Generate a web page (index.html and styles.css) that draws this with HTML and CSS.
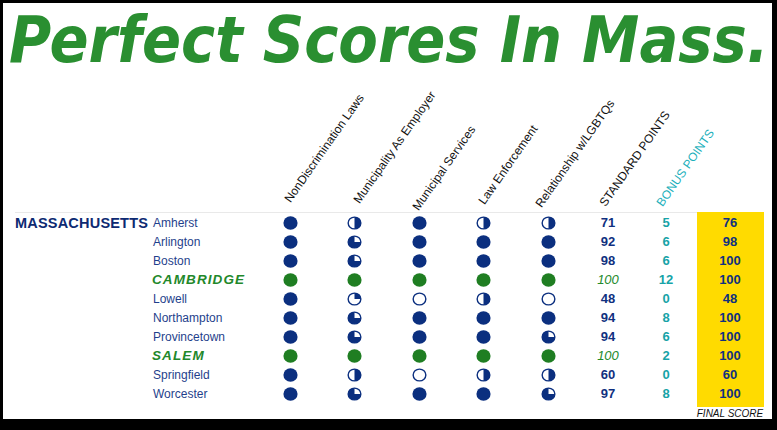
FILE: index.html
```html
<!DOCTYPE html>
<html>
<head>
<meta charset="utf-8">
<link rel="stylesheet" href="styles.css">
</head>
<body>
<svg class="defs" width="0" height="0" aria-hidden="true">
  <symbol id="full" viewBox="0 0 16 15"><ellipse cx="8" cy="7.5" rx="7.6" ry="7.1" fill="#0b2f7f"/></symbol>
  <symbol id="green" viewBox="0 0 16 15"><ellipse cx="8" cy="7.5" rx="7.6" ry="7.1" fill="#1f7e22"/></symbol>
  <symbol id="empty" viewBox="0 0 16 15"><ellipse cx="8" cy="7.5" rx="6.8" ry="6.3" fill="#fff" stroke="#0b2f7f" stroke-width="1.5"/></symbol>
  <symbol id="half" viewBox="0 0 16 15"><ellipse cx="8" cy="7.5" rx="6.8" ry="6.3" fill="#fff" stroke="#0b2f7f" stroke-width="1.5"/><path d="M8 1.2 A6.8 6.3 0 0 1 8 13.8 Z" fill="#0b2f7f"/></symbol>
  <symbol id="q1" viewBox="0 0 16 15"><ellipse cx="8" cy="7.5" rx="6.8" ry="6.3" fill="#fff" stroke="#0b2f7f" stroke-width="1.5"/><path d="M8 7.5 L8 1.2 A6.8 6.3 0 0 1 14.8 7.5 Z" fill="#0b2f7f"/></symbol>
  <symbol id="q3" viewBox="0 0 16 15"><ellipse cx="8" cy="7.5" rx="6.8" ry="6.3" fill="#fff" stroke="#0b2f7f" stroke-width="1.5"/><path d="M8 7.5 L8 1.2 A6.8 6.3 0 1 0 14.8 7.5 Z" fill="#0b2f7f"/></symbol>
</svg>
<div class="frame">
  <h1 class="title">Perfect Scores In Mass.</h1>
  <div class="board">
    <div class="head">
      <div class="hcell hc-wide"></div>
      <div class="hcell"><span class="lbl l1">NonDiscrimination Laws</span></div>
      <div class="hcell"><span class="lbl l2">Municipality As Employer</span></div>
      <div class="hcell"><span class="lbl l3">Municipal Services</span></div>
      <div class="hcell"><span class="lbl l4">Law Enforcement</span></div>
      <div class="hcell"><span class="lbl l5">Relationship w/LGBTQs</span></div>
      <div class="hcell"><span class="lbl l6">STANDARD POINTS</span></div>
      <div class="hcell"><span class="lbl l7 teal">BONUS POINTS</span></div>
    </div>
    <div class="body">
      <div class="main">
        <div class="state">MASSACHUSETTS</div><div class="city">Amherst</div>
        <div class="ic"><svg><use href="#full"/></svg></div><div class="ic"><svg><use href="#half"/></svg></div><div class="ic"><svg><use href="#full"/></svg></div><div class="ic"><svg><use href="#half"/></svg></div><div class="ic"><svg><use href="#half"/></svg></div>
        <div class="num">71</div><div class="bonus">5</div>

        <div class="state"></div><div class="city">Arlington</div>
        <div class="ic"><svg><use href="#full"/></svg></div><div class="ic"><svg><use href="#q3"/></svg></div><div class="ic"><svg><use href="#full"/></svg></div><div class="ic"><svg><use href="#full"/></svg></div><div class="ic"><svg><use href="#full"/></svg></div>
        <div class="num">92</div><div class="bonus">6</div>

        <div class="state"></div><div class="city">Boston</div>
        <div class="ic"><svg><use href="#full"/></svg></div><div class="ic"><svg><use href="#q3"/></svg></div><div class="ic"><svg><use href="#full"/></svg></div><div class="ic"><svg><use href="#full"/></svg></div><div class="ic"><svg><use href="#full"/></svg></div>
        <div class="num">98</div><div class="bonus">6</div>

        <div class="state"></div><div class="city perfect">CAMBRIDGE</div>
        <div class="ic"><svg><use href="#green"/></svg></div><div class="ic"><svg><use href="#green"/></svg></div><div class="ic"><svg><use href="#green"/></svg></div><div class="ic"><svg><use href="#green"/></svg></div><div class="ic"><svg><use href="#green"/></svg></div>
        <div class="num perfect-num">100</div><div class="bonus">12</div>

        <div class="state"></div><div class="city">Lowell</div>
        <div class="ic"><svg><use href="#full"/></svg></div><div class="ic"><svg><use href="#q1"/></svg></div><div class="ic"><svg><use href="#empty"/></svg></div><div class="ic"><svg><use href="#half"/></svg></div><div class="ic"><svg><use href="#empty"/></svg></div>
        <div class="num">48</div><div class="bonus">0</div>

        <div class="state"></div><div class="city">Northampton</div>
        <div class="ic"><svg><use href="#full"/></svg></div><div class="ic"><svg><use href="#q3"/></svg></div><div class="ic"><svg><use href="#full"/></svg></div><div class="ic"><svg><use href="#full"/></svg></div><div class="ic"><svg><use href="#full"/></svg></div>
        <div class="num">94</div><div class="bonus">8</div>

        <div class="state"></div><div class="city">Provincetown</div>
        <div class="ic"><svg><use href="#full"/></svg></div><div class="ic"><svg><use href="#q3"/></svg></div><div class="ic"><svg><use href="#full"/></svg></div><div class="ic"><svg><use href="#full"/></svg></div><div class="ic"><svg><use href="#q3"/></svg></div>
        <div class="num">94</div><div class="bonus">6</div>

        <div class="state"></div><div class="city perfect">SALEM</div>
        <div class="ic"><svg><use href="#green"/></svg></div><div class="ic"><svg><use href="#green"/></svg></div><div class="ic"><svg><use href="#green"/></svg></div><div class="ic"><svg><use href="#green"/></svg></div><div class="ic"><svg><use href="#green"/></svg></div>
        <div class="num perfect-num">100</div><div class="bonus">2</div>

        <div class="state"></div><div class="city">Springfield</div>
        <div class="ic"><svg><use href="#full"/></svg></div><div class="ic"><svg><use href="#half"/></svg></div><div class="ic"><svg><use href="#empty"/></svg></div><div class="ic"><svg><use href="#half"/></svg></div><div class="ic"><svg><use href="#half"/></svg></div>
        <div class="num">60</div><div class="bonus">0</div>

        <div class="state"></div><div class="city">Worcester</div>
        <div class="ic"><svg><use href="#full"/></svg></div><div class="ic"><svg><use href="#q3"/></svg></div><div class="ic"><svg><use href="#full"/></svg></div><div class="ic"><svg><use href="#full"/></svg></div><div class="ic"><svg><use href="#q3"/></svg></div>
        <div class="num">97</div><div class="bonus">8</div>
      </div>
      <div class="final">
        <div class="fnum">76</div>
        <div class="fnum">98</div>
        <div class="fnum">100</div>
        <div class="fnum">100</div>
        <div class="fnum">48</div>
        <div class="fnum">100</div>
        <div class="fnum">100</div>
        <div class="fnum">100</div>
        <div class="fnum">60</div>
        <div class="fnum">100</div>
      </div>
    </div>
    <div class="foot"><span class="foot-label">FINAL SCORE</span></div>
  </div>
</div>
</body>
</html>
```

FILE: styles.css
```css
* { box-sizing: border-box; }
html, body {
  margin: 0;
  padding: 0;
  background: #000;
}
body {
  width: 777px;
  height: 430px;
  overflow: hidden;
}
.defs {
  display: block;
  width: 0;
  height: 0;
  overflow: hidden;
}
.frame {
  margin: 3px 5px 0 3px;
  height: 416px;
  background: #fff;
  padding-left: 12px;
  overflow: hidden;
}
.title {
  margin: 1px 0 0 -6px;
  height: 72px;
  line-height: 72px;
  font-family: "DejaVu Sans", sans-serif;
  font-stretch: semi-condensed;
  font-weight: bold;
  font-style: italic;
  font-size: 64px;
  color: #2a8f31;
  white-space: nowrap;
}
.board {
  width: 748.5px;
}
.head {
  display: grid;
  grid-template-columns: 243px repeat(5, 64.5px) 55px 61px;
  height: 137px;
  width: 681.5px;
  border-bottom: 1px solid #e9e9e9;
}
.hcell {
  display: flex;
  align-items: flex-end;
  min-width: 0;
}
.lbl {
  display: inline-block;
  white-space: nowrap;
  font-family: "Liberation Sans", Arial, sans-serif;
  font-size: 12px;
  line-height: 13px;
  color: #111;
  transform: rotate(-55deg);
  transform-origin: left bottom;
}
.teal { color: #1bb0bb; }
.l1 { margin: 0 0 7px 35px; }
.l2 { margin: 0 0 6px 39px; }
.l3 { margin: 0 0 -1px 34px; }
.l4 { margin: 0 0 5px 35px; }
.l5 { margin: 0 0 2px 28px; }
.l6 { margin: 0 0 3px 27px; }
.l7 { margin: 0 0 3px 29px; }
.body {
  display: flex;
  align-items: flex-start;
}
.main {
  display: grid;
  grid-template-columns: 138px 105px repeat(5, 64.5px) 55px 61px;
  grid-auto-rows: 19px;
  width: 681.5px;
}
.main > div {
  display: flex;
  align-items: center;
}
.state {
  font-family: "Liberation Sans", Arial, sans-serif;
  font-weight: bold;
  font-size: 14.5px;
  letter-spacing: 0.2px;
  color: #0d2a72;
  padding-top: 1px;
}
.city {
  font-family: "Liberation Sans", Arial, sans-serif;
  font-size: 12px;
  color: #1f3f8c;
}
.city.perfect {
  font-weight: bold;
  font-style: italic;
  font-size: 13.5px;
  letter-spacing: 1.1px;
  color: #22882a;
  margin-left: -1px;
}
.ic {
  justify-content: center;
}
.ic svg {
  width: 15px;
  height: 14px;
  display: block;
}
.num, .bonus, .fnum {
  justify-content: center;
  font-family: "Liberation Sans", Arial, sans-serif;
  font-weight: bold;
  font-size: 13px;
  color: #10307f;
}
.num.perfect-num {
  font-weight: normal;
  font-style: italic;
  color: #238a2b;
}
.bonus {
  color: #17a3a7;
}
.final {
  width: 67px;
  margin-top: -1px;
  padding: 1px 0 4px;
  background: #ffdb00;
  display: flex;
  flex-direction: column;
}
.fnum {
  display: flex;
  align-items: center;
  height: 19px;
}
.foot {
  display: flex;
  justify-content: flex-end;
  padding-top: 1px;
}
.foot-label {
  width: 67px;
  text-align: center;
  font-family: "Liberation Sans", Arial, sans-serif;
  font-style: italic;
  font-size: 10px;
  line-height: 11px;
  color: #111;
}
```
